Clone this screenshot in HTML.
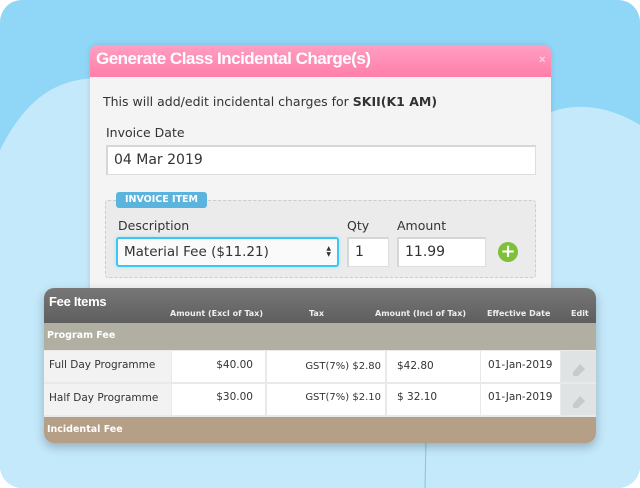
<!DOCTYPE html>
<html><head><meta charset="utf-8"><style>
*{box-sizing:border-box;margin:0;padding:0}
body{width:640px;height:488px;background:#fff;overflow:hidden;position:relative;font-family:"DejaVu Sans","Liberation Sans",sans-serif}
.card{position:absolute;left:0;top:0;width:640px;height:488px;border-radius:22px;overflow:hidden;background:#8fd6f7}
.abs{position:absolute}
.modal{left:90px;top:45px;width:461px;height:260px;background:#f4f4f4;border-radius:8px 8px 0 0;box-shadow:0 0 6px rgba(0,0,0,.12)}
.mh{left:0;top:0;width:461px;height:32px;border-radius:8px 8px 0 0;background:linear-gradient(#ff9fc2,#ff7fa8);color:#fff;font-weight:bold;font-size:17px;line-height:28px;padding-left:6px;font-family:"Liberation Sans",sans-serif;letter-spacing:-0.5px}
.t{font-size:12.5px;color:#333}
.inp{background:#fff;border:1px solid #ddd;border-top:2px solid #d6d6d6;border-left:2px solid #d6d6d6;font-size:14px;color:#333;padding-left:6px}
.tbl{left:44px;top:288px;width:552px;height:155px;border-radius:10px;overflow:hidden;box-shadow:0 4px 10px rgba(0,0,0,.25);background:#fff}
.hd{color:#eee;font-size:8px;font-weight:bold;top:21px}
.cell{background:#fff;font-size:10.5px;color:#333;height:31px;line-height:29px}
</style></head><body>
<div class="card">
<svg class="abs" style="left:0;top:0" width="640" height="488"><path d="M0,150 C25,100 55,78 100,78 L540,118 C560,104 600,100 640,125 L640,488 L0,488 Z" fill="#c4e9fb"/><line x1="426" y1="440" x2="425" y2="488" stroke="#7fc4e8" stroke-width="1"/></svg>
<div class="abs modal">
 <div class="abs mh">Generate Class Incidental Charge(s)<span style="position:absolute;right:6px;top:1px;font-size:11px;color:#f3d6e0">×</span></div>
 <div class="abs t" style="left:13px;top:49px">This will add/edit incidental charges for <b>SKII(K1 AM)</b></div>
 <div class="abs t" style="left:16px;top:80px">Invoice Date</div>
 <div class="abs inp" style="left:16px;top:100px;width:430px;height:30px;line-height:27px">04 Mar 2019</div>
 <div class="abs" style="left:15px;top:155px;width:431px;height:78px;border:1px dashed #ccc;background:#ebebeb;border-radius:3px"></div>
 <div class="abs" style="left:26px;top:147px;width:91px;height:16px;background:#5ab4de;border-radius:3px;color:#fff;font-size:9.5px;font-weight:bold;line-height:16px;text-align:center">INVOICE ITEM</div>
 <div class="abs t" style="left:28px;top:173px">Description</div>
 <div class="abs t" style="left:257px;top:173px">Qty</div>
 <div class="abs t" style="left:307px;top:173px">Amount</div>
 <div class="abs" style="left:26px;top:192px;width:223px;height:30px;border:2px solid #3dc6f2;border-radius:3px;background:#fafafa;font-size:13.5px;color:#333;line-height:26px;padding-left:6px;box-shadow:0 0 3px #9fe3f8">Material Fee ($11.21)<span style="position:absolute;right:6px;top:7px;font-size:6px;line-height:6px">▲<br>▼</span></div>
 <div class="abs inp" style="left:257px;top:192px;width:42px;height:30px;line-height:27px">1</div>
 <div class="abs inp" style="left:307px;top:192px;width:89px;height:30px;line-height:27px">11.99</div>
 <div class="abs" style="left:408px;top:197px;width:20px;height:20px;border-radius:50%;background:#7ec03a;color:#fff;font-size:18px;font-weight:bold;line-height:19px;text-align:center">+</div>
</div>
<div class="abs tbl">
 <div class="abs" style="left:0;top:0;width:552px;height:35px;background:linear-gradient(#777,#5e5e5e)"></div>
 <div class="abs" style="left:5px;top:6px;color:#fff;font-weight:bold;font-size:13px;font-family:'Liberation Sans',sans-serif;letter-spacing:-0.3px">Fee Items</div>
 <div class="abs hd" style="left:126px">Amount (Excl of Tax)</div>
 <div class="abs hd" style="left:265px">Tax</div>
 <div class="abs hd" style="left:331px">Amount (Incl of Tax)</div>
 <div class="abs hd" style="left:443px">Effective Date</div>
 <div class="abs hd" style="left:527px">Edit</div>
 <div class="abs" style="left:0;top:35px;width:552px;height:27px;background:#b1afa2;color:#fff;font-size:9.5px;font-weight:bold;line-height:26px;padding-left:3px">Program Fee</div>
 <div class="abs" style="left:0;top:62px;width:552px;height:67px;background:#e9e9e9"></div>
 <div class="abs cell" style="left:0;top:63px;width:127px;background:#f2f2f2;padding-left:5px">Full Day Programme</div>
 <div class="abs cell" style="left:128px;top:63px;width:93px;text-align:right;padding-right:12px;line-height:28px">$40.00</div>
 <div class="abs cell" style="left:223px;top:63px;width:118px;text-align:right;padding-right:4px;font-size:10px;line-height:32px">GST(7%) $2.80</div>
 <div class="abs cell" style="left:343px;top:63px;width:93px;padding-left:10px;line-height:31px">$42.80</div>
 <div class="abs cell" style="left:437px;top:63px;width:79px;padding-left:7px;line-height:28px">01-Jan-2019</div>
 <div class="abs cell" style="left:517px;top:63px;width:35px;background:#e0e3e4"></div>
 <div class="abs cell" style="left:0;top:96px;width:127px;background:#f2f2f2;padding-left:5px">Half Day Programme</div>
 <div class="abs cell" style="left:128px;top:96px;width:93px;text-align:right;padding-right:12px;line-height:27px">$30.00</div>
 <div class="abs cell" style="left:223px;top:96px;width:118px;text-align:right;padding-right:4px;font-size:10px;line-height:27px">GST(7%) $2.10</div>
 <div class="abs cell" style="left:343px;top:96px;width:93px;padding-left:10px;line-height:27px">$ 32.10</div>
 <div class="abs cell" style="left:437px;top:96px;width:79px;padding-left:7px;line-height:27px">01-Jan-2019</div>
 <div class="abs cell" style="left:517px;top:96px;width:35px;background:#e0e3e4"></div>
 <svg class="abs" style="left:526px;top:70px" width="16" height="60"><g fill="#c8cbcc"><path d="M3,14 L10,6 L15,11 L8,18 L3,18 Z"/><path d="M3,46 L10,38 L15,43 L8,50 L3,50 Z"/></g></svg>
 <div class="abs" style="left:0;top:129px;width:552px;height:26px;background:#b59f86;color:#fff;font-size:9.5px;font-weight:bold;line-height:26px;padding-left:3px">Incidental Fee</div>
</div>
</div>
</body></html>
